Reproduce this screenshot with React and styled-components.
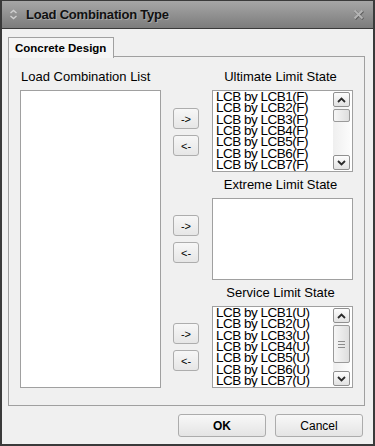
import React from 'react'
import styled, { createGlobalStyle } from 'styled-components'

const GlobalStyle = createGlobalStyle`
    html, body {
        margin: 0;
        padding: 0;
        background: #f0f0f0;
    }
    * {
        box-sizing: border-box;
    }
`

const Window = styled.div`
    width: 375px;
    height: 446px;
    display: flex;
    flex-direction: column;
    background: #f0f0f0;
    border: 2px solid #3a3a3a;
    border-top-width: 1px;
    font-family: "Liberation Sans", Arial, sans-serif;
    color: #000;
    overflow: hidden;
`

const TitleBar = styled.div`
    height: 28px;
    flex-shrink: 0;
    display: flex;
    align-items: center;
    padding: 0 9px 0 7px;
    background: linear-gradient(#a6a6a6, #7c7c7c);
    border-bottom: 1px solid #3a3a3a;
`

const Title = styled.div`
    flex: 1;
    margin-left: 8px;
    font-size: 13px;
    font-weight: bold;
    letter-spacing: -0.2px;
    color: #111;
    text-shadow: 1px 1px 0 rgba(255, 255, 255, 0.25);
`

const Body = styled.div`
    flex: 1;
    display: flex;
    flex-direction: column;
    padding: 8px 8px 0 6px;
`

const TabRow = styled.div`
    display: flex;
    height: 20px;
    position: relative;
    z-index: 1;
    margin-bottom: -1px;
`

const Tab = styled.div`
    height: 21px;
    width: 106px;
    padding: 4px 0 0 6px;
    font-size: 11.5px;
    font-weight: bold;
    background: #f5f5f5;
    border: 1px solid #a0a0a0;
    border-bottom: none;
`

const Panel = styled.div`
    height: 350px;
    display: flex;
    gap: 12px;
    padding: 7px 11px 17px 11px;
    border: 1px solid #a0a0a0;
`

const LeftColumn = styled.div`
    width: 141px;
    display: flex;
    flex-direction: column;
`

const RightColumn = styled.div`
    display: flex;
    flex-direction: column;
`

const Section = styled.div`
    display: grid;
    grid-template-columns: 26px 141px;
    grid-template-rows: 26px ${p => p.$box}px;
    column-gap: 13px;
`

const Label = styled.div`
    grid-column: 2;
    height: 26px;
    display: flex;
    align-items: flex-end;
    justify-content: ${p => (p.$left ? 'flex-start' : 'center')};
    padding: 0 ${p => (p.$left ? '0 5px 1px' : '4px 5px 0')};
    padding-bottom: 5px;
    font-size: 13px;
    line-height: 16px;
    white-space: nowrap;
`

const MoveButtons = styled.div`
    grid-column: 1;
    grid-row: 2;
    display: flex;
    flex-direction: column;
    justify-content: center;
    gap: 6px;
    padding-top: ${p => p.$shift || 0}px;
`

const SmallButton = styled.button`
    width: 26px;
    height: 21px;
    padding: 0;
    font-family: "Liberation Sans", Arial, sans-serif;
    font-size: 11px;
    color: #000;
    border: 1px solid #adadad;
    border-radius: 3px;
    background: linear-gradient(#f7f7f7, #e6e6e6);
`

const ListBox = styled.div`
    grid-column: 2;
    grid-row: 2;
    height: ${p => p.$h}px;
    display: flex;
    background: #fff;
    border: 1px solid #a0a0a0;
    overflow: hidden;
`

const Items = styled.div`
    flex: 1;
    overflow: hidden;
    padding: 0 0 0 3px;
`

const Item = styled.div`
    font-size: 13.5px;
    line-height: 11.33px;
    letter-spacing: -0.5px;
    white-space: nowrap;
`

const ScrollBar = styled.div`
    width: 19px;
    display: flex;
    flex-direction: column;
    padding: 1px 2px 1px 0;
`

const ArrowButton = styled.div`
    height: 15px;
    display: flex;
    align-items: center;
    justify-content: center;
    border: 1px solid #909090;
    border-radius: 2px;
    background: linear-gradient(#fdfdfd, #e2e2e2);
`

const Track = styled.div`
    flex: 1;
    padding: 2px 0;
    background: linear-gradient(to right, #efefef, #fbfbfb);
`

const Thumb = styled.div`
    height: ${p => p.$h}px;
    display: flex;
    flex-direction: column;
    align-items: center;
    justify-content: center;
    gap: 2px;
    border: 1px solid #9a9a9a;
    border-radius: 2px;
    background: linear-gradient(to right, #f6f6f6, #dedede);
`

const Grip = styled.div`
    width: 7px;
    height: 1px;
    background: #8c8c8c;
`

const Footer = styled.div`
    display: flex;
    justify-content: flex-end;
    gap: 9px;
    padding: 8px 2px 0 0;
`

const DialogButton = styled.button`
    width: 88px;
    height: 23px;
    font-family: "Liberation Sans", Arial, sans-serif;
    font-size: 12px;
    font-weight: ${p => (p.$primary ? 'bold' : 'normal')};
    color: #000;
    border: 1px solid #acacac;
    border-radius: 3px;
    background: linear-gradient(#f8f8f8, #e4e4e4);
`

const Chevron = ({ up }) => (
    <svg width="9" height="6" viewBox="0 0 9 6">
        <path
            d={up ? 'M1 5 L4.5 1.5 L8 5' : 'M1 1 L4.5 4.5 L8 1'}
            fill="none"
            stroke="#2a2a2a"
            strokeWidth="1.8"
        />
    </svg>
)

const ScrollCtl = ({ thumb }) => (
    <ScrollBar>
        <ArrowButton><Chevron up /></ArrowButton>
        <Track>
            <Thumb $h={thumb}>
                {thumb > 20 && (
                    <>
                        <Grip />
                        <Grip />
                        <Grip />
                    </>
                )}
            </Thumb>
        </Track>
        <ArrowButton><Chevron /></ArrowButton>
    </ScrollBar>
)

const ultimate = [1, 2, 3, 4, 5, 6, 7, 8, 9, 10].map(n => `LCB by LCB${n}(F)`)
const service = [1, 2, 3, 4, 5, 6, 7, 8].map(n => `LCB by LCB${n}(U)`)

const StateSection = ({ title, items, thumb, shift }) => (
    <Section $box={82}>
        <Label>{title}</Label>
        <MoveButtons $shift={shift}>
            <SmallButton>-&gt;</SmallButton>
            <SmallButton>&lt;-</SmallButton>
        </MoveButtons>
        <ListBox $h={82}>
            {items && (
                <>
                    <Items>
                        {items.map(t => <Item key={t}>{t}</Item>)}
                    </Items>
                    <ScrollCtl thumb={thumb} />
                </>
            )}
        </ListBox>
    </Section>
)

const App = () => {
    return (
        <>
            <GlobalStyle />
            <Window>
                <TitleBar>
                    <svg width="9" height="11" viewBox="0 0 9 11">
                        <path d="M1.5 4 L4.5 1.5 L7.5 4 M1.5 7 L4.5 9.5 L7.5 7" fill="none" stroke="#d0d0d0" strokeWidth="1.4" />
                    </svg>
                    <Title>Load Combination Type</Title>
                    <svg width="11" height="11" viewBox="0 0 11 11">
                        <path d="M1.5 1.5 L9.5 9.5 M9.5 1.5 L1.5 9.5" stroke="#5a5a5a" strokeWidth="2.6" transform="translate(0.6 0.6)" />
                        <path d="M1.5 1.5 L9.5 9.5 M9.5 1.5 L1.5 9.5" stroke="#b4b4b4" strokeWidth="2" />
                    </svg>
                </TitleBar>
                <Body>
                    <TabRow>
                        <Tab>Concrete Design</Tab>
                    </TabRow>
                    <Panel>
                        <LeftColumn>
                            <Label $left>Load Combination List</Label>
                            <ListBox $h={298} />
                        </LeftColumn>
                        <RightColumn>
                            <StateSection title="Ultimate Limit State" items={ultimate} thumb={13} shift={2} />
                            <StateSection title="Extreme Limit State" />
                            <StateSection title="Service Limit State" items={service} thumb={38} />
                        </RightColumn>
                    </Panel>
                    <Footer>
                        <DialogButton $primary>OK</DialogButton>
                        <DialogButton>Cancel</DialogButton>
                    </Footer>
                </Body>
            </Window>
        </>
    )
}

export default App
